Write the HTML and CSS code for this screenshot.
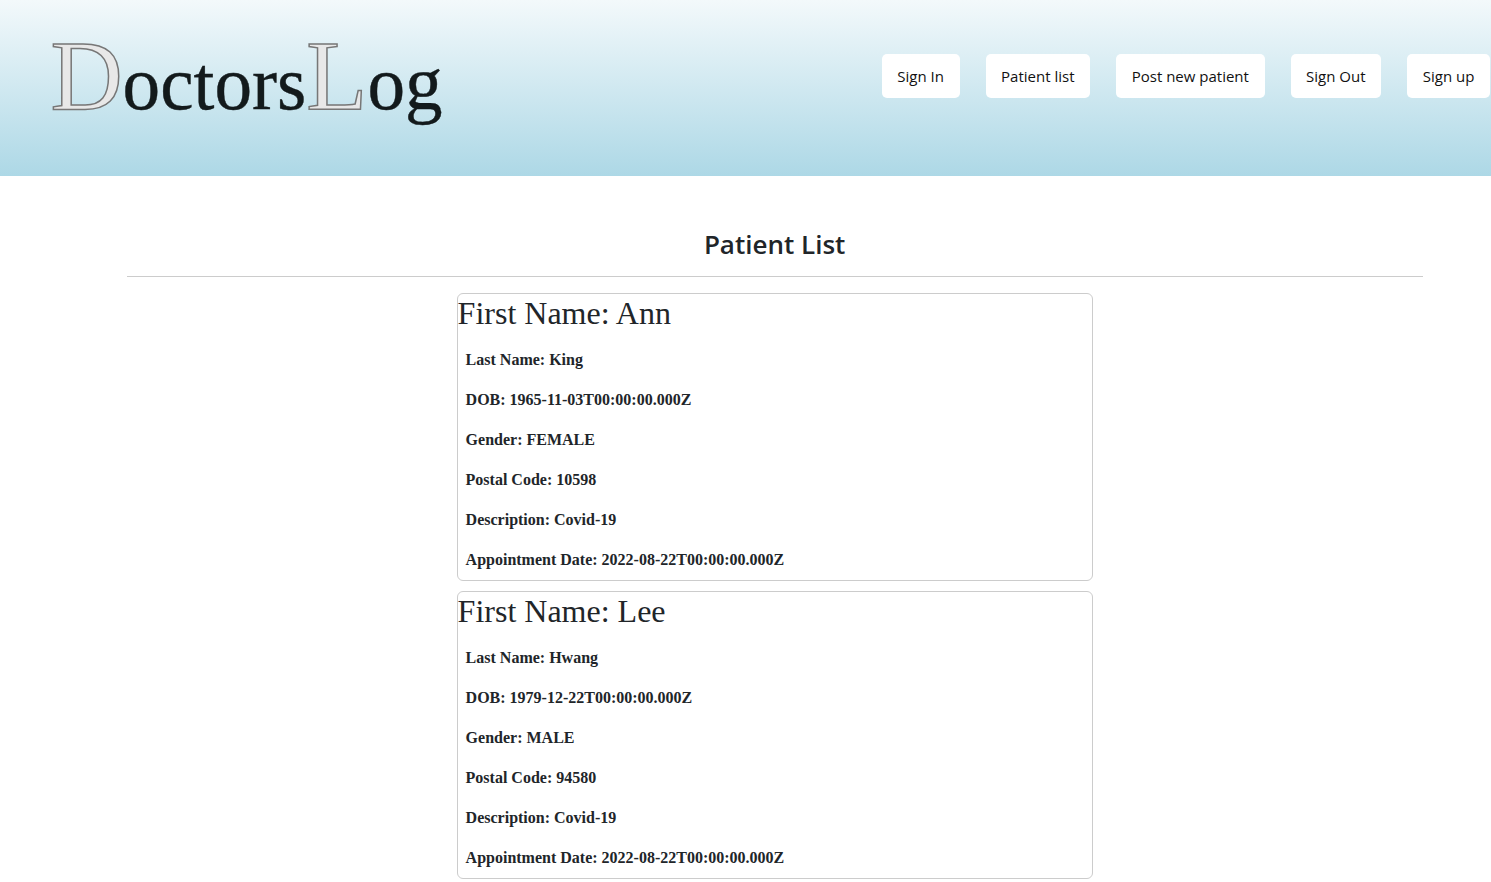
FILE: index.html
```html
<!DOCTYPE html>
<html>
<head>
    <title>DoctorsLog</title>
    <link rel="stylesheet" href="styles.css">
</head>
<body>
    <!-- Header with logo and nav links -->
    <header class="site-header">
        <div class="logo"><span class="logo-cap">D</span>octors<span class="logo-cap">L</span>og</div>
        <nav class="nav-links">
            <a class="nav-btn" href="#">Sign In</a>
            <a class="nav-btn" href="#">Patient list</a>
            <a class="nav-btn" href="#">Post new patient</a>
            <a class="nav-btn" href="#">Sign Out</a>
            <a class="nav-btn" href="#">Sign up</a>
        </nav>
    </header>

    <!-- Patient list -->
    <main class="main-content">
        <h2 class="page-title">Patient List</h2>
        <hr class="divider">

        <div class="patient-card">
            <h3 class="patient-name">First Name: Ann</h3>
            <div class="patient-body">
                <p>Last Name: King</p>
                <p>DOB: 1965-11-03T00:00:00.000Z</p>
                <p>Gender: FEMALE</p>
                <p>Postal Code: 10598</p>
                <p>Description: Covid-19</p>
                <p>Appointment Date: 2022-08-22T00:00:00.000Z</p>
            </div>
        </div>

        <div class="patient-card">
            <h3 class="patient-name">First Name: Lee</h3>
            <div class="patient-body">
                <p>Last Name: Hwang</p>
                <p>DOB: 1979-12-22T00:00:00.000Z</p>
                <p>Gender: MALE</p>
                <p>Postal Code: 94580</p>
                <p>Description: Covid-19</p>
                <p>Appointment Date: 2022-08-22T00:00:00.000Z</p>
            </div>
        </div>
    </main>
</body>
</html>
```

FILE: styles.css
```css
/* Basic styling for the page */
body {
    margin: 0;
    font-family: "Liberation Serif", serif;
    font-size: 16px;
    line-height: 1.5;
    color: #212529;
    background-color: #fff;
}

/* Header */
.site-header {
    height: 176px;
    display: flex;
    align-items: center;
    justify-content: space-between;
    padding: 0 1px 0 50.4px;
    box-sizing: border-box;
    background: linear-gradient(to bottom, #f3f9fb, #add8e6);
}

.logo {
    font-size: 75.2px;
    line-height: 1;
    color: #131a1c;
    margin-bottom: 24px;
    -webkit-text-stroke: 0.4px #131a1c;
}

.logo-cap {
    font-size: 100px;
    color: #e8e8e8;
    -webkit-text-stroke: 1.5px #777;
}

.nav-links {
    display: flex;
    gap: 26px;
    margin-bottom: 24px;
}

.nav-btn {
    height: 44px;
    padding: 0 15.6px;
    display: flex;
    align-items: center;
    background-color: #fff;
    border-radius: 5px;
    color: #111;
    text-decoration: none;
    font-family: "Open Sans", sans-serif;
    font-size: 15px;
}

/* Main content */
.main-content {
    padding: 0 68.4px 0 126.6px;
}

.page-title {
    margin: 0;
    padding-top: 51px;
    text-align: center;
    font-family: "Open Sans", sans-serif;
    font-size: 26px;
    font-weight: 600;
    line-height: 34px;
}

.divider {
    margin: 15px 0 16px;
    border: none;
    border-top: 1px solid #ccc;
}

/* Patient cards */
.patient-card {
    width: 636px;
    box-sizing: border-box;
    margin: 0 auto 10px;
    border: 1px solid #ccc;
    border-radius: 6px;
}

.patient-name {
    margin: 0 0 8px;
    font-size: 32px;
    font-weight: normal;
    line-height: 38px;
}

.patient-body {
    padding: 8px;
}

.patient-body p {
    margin: 0 0 16px;
    font-weight: bold;
}

.patient-body p:last-child {
    margin-bottom: 0;
}
```
